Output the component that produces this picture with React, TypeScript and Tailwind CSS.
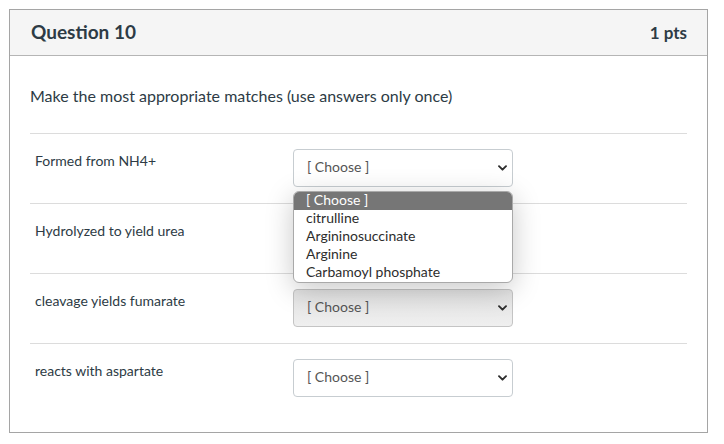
const rows = [
  "Formed from NH4+",
  "Hydrolyzed to yield urea",
  "cleavage yields fumarate",
  "reacts with aspartate",
];

const options = [
  "[ Choose ]",
  "citrulline",
  "Argininosuccinate",
  "Arginine",
  "Carbamoyl phosphate",
];

function Chevron() {
  return (
    <svg width="9" height="6" viewBox="0 0 9 6" className="text-[#2d2d2d]">
      <path d="M1 1.2 L4.5 4.7 L8 1.2" fill="none" stroke="currentColor" strokeWidth="1.9" strokeLinecap="round" strokeLinejoin="round" />
    </svg>
  );
}

function FakeSelect({ dimmed }: { dimmed?: boolean }) {
  return (
    <div
      className={
        dimmed
          ? "flex h-[38px] w-[220px] items-center justify-between rounded-[4px] border border-[#c4c4c4] bg-gradient-to-b from-[#e2e2e2] to-[#efefef] pl-[13px] pr-[5px]"
          : "flex h-[38px] w-[220px] items-center justify-between rounded-[4px] border border-[#c7cdd1] bg-white pl-[13px] pr-[5px]"
      }
    >
      <span className="pb-[3px] text-[14px] leading-[18px] text-[#555]">[ Choose ]</span>
      <Chevron />
    </div>
  );
}

export default function App() {
  return (
    <div className="min-h-screen bg-white pl-[9px] pt-[9px] font-['Lato','Liberation_Sans',sans-serif] text-[#2d3b45]">
      <div className="w-[699px] border border-[#a5a5a5]">
        <div className="flex h-[46px] items-center justify-between border-b border-[#b5b5b5] bg-[#f5f5f5] pl-[21px] pr-[20px]">
          <h2 className="text-[19px] font-bold text-[#2d3b45]">Question 10</h2>
          <span className="text-[17px] font-bold text-[#2d3b45]">1 pts</span>
        </div>

        <div className="px-[20px] pb-[19px] pt-[29px]">
          <p className="text-[16px] leading-[22px] text-[#2d3b45]">
            Make the most appropriate matches (use answers only once)
          </p>

          <div className="mt-[26px]">
            {rows.map((label, i) => (
              <div key={label} className="flex h-[70px] border-t border-[#dcdcdc]">
                <div className="w-[263px] shrink-0 pl-[5px] pt-[18px] text-[14px] leading-[18px] text-[#2d3b45]">
                  {label}
                </div>
                <div className="relative mt-[15px]">
                  <FakeSelect dimmed={i === 2} />
                  {i === 0 && (
                    <ul className="absolute left-0 top-[42px] z-10 w-[220px] overflow-hidden rounded-[6px] border border-[#a9a9a9] bg-white shadow-[0_6px_28px_rgba(0,0,0,0.22)]">
                      {options.map((opt, j) => (
                        <li
                          key={opt}
                          className={
                            j === 0
                              ? "h-[18px] bg-[#767676] pl-[12px] text-[14px] leading-[15px] text-white"
                              : "h-[18px] pl-[12px] text-[14px] leading-[15px] text-[#2d2d2d]"
                          }
                        >
                          {opt}
                        </li>
                      ))}
                    </ul>
                  )}
                </div>
              </div>
            ))}
          </div>
        </div>
      </div>
    </div>
  );
}
